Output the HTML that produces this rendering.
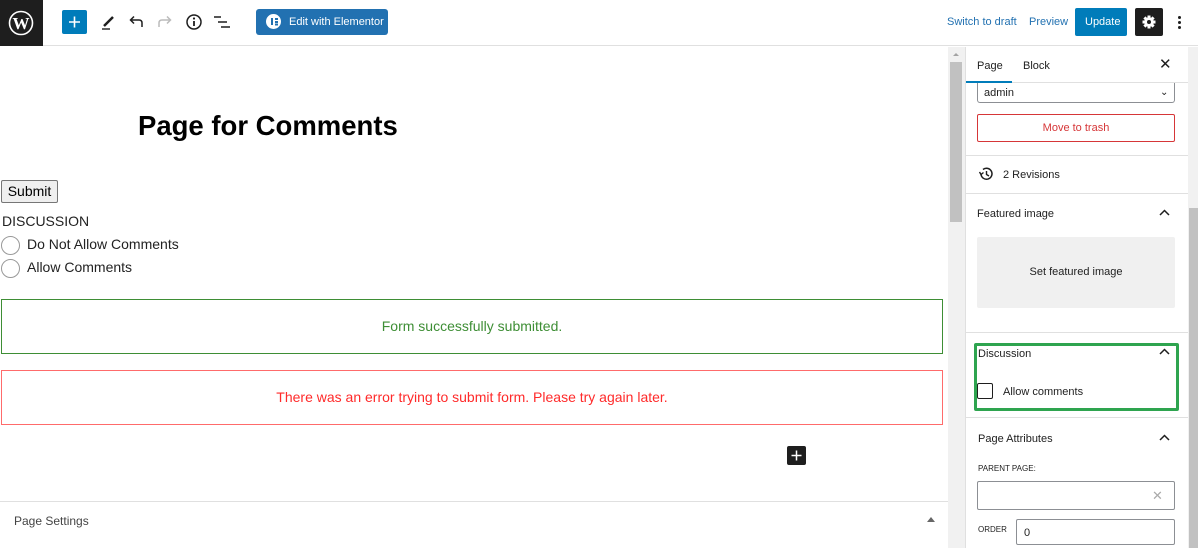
<!DOCTYPE html>
<html><head><style>
*{margin:0;padding:0;box-sizing:border-box}
body{width:1198px;height:548px;overflow:hidden;background:#fff;font-family:"Liberation Sans",sans-serif;color:#1e1e1e;position:relative}
.a{position:absolute}
.t{font-size:11px;white-space:nowrap}
</style></head><body>
<div class="a" style="left:0;top:0;width:1198px;height:46px;border-bottom:1px solid #e0e0e0"></div>
<div class="a" style="left:0;top:0;width:43px;height:46px;background:#1e1e1e"></div>
<svg class="a" style="left:8px;top:10px" width="26" height="26" viewBox="0 0 26 26"><circle cx="13" cy="13" r="11.5" fill="none" stroke="#fff" stroke-width="1.6"/><text x="13" y="19" text-anchor="middle" font-family="Liberation Serif" font-weight="bold" font-size="17" fill="#fff">W</text></svg>
<div class="a" style="left:62px;top:10px;width:25px;height:24px;background:#007cba;border-radius:2px"></div>
<svg class="a" style="left:62px;top:10px" width="25" height="24"><path d="M12.5 6.5 V17.5 M7 12 H18" stroke="#fff" stroke-width="1.6"/></svg>
<svg class="a" style="left:100px;top:12px" width="18" height="20"><path d="M4 14 L13 5" stroke="#1e1e1e" stroke-width="2.5"/><path d="M2 17 H10" stroke="#1e1e1e" stroke-width="1.4"/></svg>
<svg class="a" style="left:128px;top:14px" width="18" height="16"><path d="M14 13 V9 Q14 6 11 6 H3 M6 2.5 L2.5 6 L6 9.5" fill="none" stroke="#1e1e1e" stroke-width="1.5"/></svg>
<svg class="a" style="left:156px;top:14px" width="18" height="16"><path d="M3 13 V9 Q3 6 6 6 H14 M11 2.5 L14.5 6 L11 9.5" fill="none" stroke="#bbb" stroke-width="1.5"/></svg>
<svg class="a" style="left:185px;top:13px" width="18" height="18"><circle cx="9" cy="9" r="7" fill="none" stroke="#1e1e1e" stroke-width="1.5"/><path d="M9 8 V13" stroke="#1e1e1e" stroke-width="1.8"/><circle cx="9" cy="5.5" r="1.1" fill="#1e1e1e"/></svg>
<svg class="a" style="left:213px;top:14px" width="20" height="16"><path d="M1 3 H8 M5 8 H14 M8 13 H17" stroke="#1e1e1e" stroke-width="1.6"/></svg>
<div class="a" style="left:256px;top:9px;width:132px;height:26px;background:#2271b1;border-radius:3px"></div>
<div class="a" style="left:266px;top:14px;width:15px;height:15px;border-radius:50%;background:#fff"></div>
<div class="a" style="left:271px;top:18px;width:2px;height:7px;background:#2271b1"></div>
<div class="a" style="left:275px;top:18px;width:3px;height:1.5px;background:#2271b1;box-shadow:0 3px 0 #2271b1,0 5.5px 0 #2271b1"></div>
<div class="a t" style="left:289px;top:16px;color:#fff">Edit with Elementor</div>
<div class="a t" style="left:947px;top:16px;color:#2271b1">Switch to draft</div>
<div class="a t" style="left:1029px;top:16px;color:#2271b1">Preview</div>
<div class="a" style="left:1075px;top:8px;width:52px;height:28px;background:#007cba;border-radius:2px"></div>
<div class="a t" style="left:1085px;top:16px;color:#fff">Update</div>
<div class="a" style="left:1135px;top:8px;width:28px;height:28px;background:#1e1e1e;border-radius:2px"></div>
<svg class="a" style="left:1141px;top:14px" width="16" height="16" viewBox="0 0 16 16"><g stroke="#fff" stroke-width="3"><path d="M8 1.5 V14.5 M1.5 8 H14.5 M3.4 3.4 L12.6 12.6 M12.6 3.4 L3.4 12.6"/></g><circle cx="8" cy="8" r="4.8" fill="#fff"/><circle cx="8" cy="8" r="2" fill="#1e1e1e"/></svg>
<div class="a" style="left:1178px;top:16px;width:3px;height:3px;border-radius:50%;background:#1e1e1e;box-shadow:0 5px 0 #1e1e1e,0 10px 0 #1e1e1e"></div>
<div class="a" style="left:138px;top:110px;font-size:27.5px;font-weight:bold;color:#000">Page for Comments</div>
<div class="a" style="left:1px;top:180px;width:57px;height:23px;background:#efefef;border:1px solid #767676;border-radius:2px;font-size:14px;line-height:21px;text-align:center;color:#000">Submit</div>
<div class="a" style="left:2px;top:213px;font-size:14px;color:#222">DISCUSSION</div>
<div class="a" style="left:1px;top:236px;width:19px;height:19px;border:1px solid #999;border-radius:50%"></div>
<div class="a" style="left:27px;top:236px;font-size:14px;color:#222">Do Not Allow Comments</div>
<div class="a" style="left:1px;top:259px;width:19px;height:19px;border:1px solid #999;border-radius:50%"></div>
<div class="a" style="left:27px;top:259px;font-size:14px;color:#222">Allow Comments</div>
<div class="a" style="left:1px;top:299px;width:942px;height:55px;border:1px solid #3e8e35;text-align:center;line-height:53px;font-size:14px;color:#3e8e35">Form successfully submitted.</div>
<div class="a" style="left:1px;top:370px;width:942px;height:55px;border:1px solid #ff6b6b;text-align:center;line-height:53px;font-size:14px;color:#ff2a2a">There was an error trying to submit form. Please try again later.</div>
<div class="a" style="left:787px;top:446px;width:19px;height:19px;background:#1e1e1e;border-radius:2px"></div>
<svg class="a" style="left:787px;top:446px" width="19" height="19"><path d="M9.5 4.5 V14.5 M4.5 9.5 H14.5" stroke="#fff" stroke-width="1.5"/></svg>
<div class="a" style="left:0;top:501px;width:948px;height:1px;background:#e0e0e0"></div>
<div class="a" style="left:14px;top:514px;font-size:12px;color:#444">Page Settings</div>
<div class="a" style="left:927px;top:517px;width:0;height:0;border-left:4px solid transparent;border-right:4px solid transparent;border-bottom:5px solid #666"></div>
<div class="a" style="left:948px;top:47px;width:17px;height:501px;background:#f1f1f1"></div>
<div class="a" style="left:950px;top:62px;width:12px;height:160px;background:#c1c1c1"></div>
<div class="a" style="left:953px;top:53px;border-left:3px solid transparent;border-right:3px solid transparent;border-bottom:3px solid #a3a3a3"></div>
<div class="a" style="left:965px;top:47px;width:1px;height:501px;background:#e0e0e0"></div>
<div class="a" style="left:1188px;top:47px;width:10px;height:501px;background:#f1f1f1"></div>
<div class="a" style="left:1189px;top:208px;width:9px;height:340px;background:#c1c1c1"></div>
<div class="a t" style="left:977px;top:60px">Page</div>
<div class="a t" style="left:1023px;top:60px">Block</div>
<div class="a" style="left:1159px;top:55px;font-size:15px">✕</div>
<div class="a" style="left:966px;top:82px;width:222px;height:1px;background:#e0e0e0"></div>
<div class="a" style="left:966px;top:81px;width:46px;height:2px;background:#007cba"></div>
<div class="a" style="left:977px;top:83px;width:198px;height:20px;border:1px solid #8c8f94;border-top:none;border-radius:0 0 3px 3px"></div>
<div class="a t" style="left:984px;top:87px">admin</div>
<div class="a" style="left:1160px;top:87px;font-size:10px">⌄</div>
<div class="a" style="left:977px;top:114px;width:198px;height:28px;border:1px solid #d63638;border-radius:2px;text-align:center;line-height:26px;font-size:11px;color:#d63638">Move to trash</div>
<div class="a" style="left:966px;top:155px;width:222px;height:1px;background:#e0e0e0"></div>
<svg class="a" style="left:978px;top:166px" width="16" height="16"><path d="M3 8 A5.5 5.5 0 1 0 5 3.5" fill="none" stroke="#1e1e1e" stroke-width="1.5"/><path d="M1.5 6 L3 8.5 L5.5 6.5" fill="none" stroke="#1e1e1e" stroke-width="1.4"/><path d="M8.5 5 V8.5 L11 10" fill="none" stroke="#1e1e1e" stroke-width="1.4"/></svg>
<div class="a t" style="left:1003px;top:169px">2 Revisions</div>
<div class="a" style="left:966px;top:193px;width:222px;height:1px;background:#e0e0e0"></div>
<div class="a t" style="left:977px;top:208px">Featured image</div>
<svg class="a" style="left:1159px;top:209px" width="11" height="7"><path d="M1 6 L5.5 1.5 L10 6" fill="none" stroke="#1e1e1e" stroke-width="1.5"/></svg>
<div class="a" style="left:977px;top:237px;width:198px;height:71px;background:#f0f0f0;border-radius:2px;text-align:center;line-height:71px;font-size:11px">Set featured image</div>
<div class="a" style="left:966px;top:332px;width:222px;height:1px;background:#e0e0e0"></div>
<div class="a" style="left:974px;top:343px;width:205px;height:68px;border:3px solid #2ea44f;border-radius:2px"></div>
<div class="a t" style="left:978px;top:348px">Discussion</div>
<svg class="a" style="left:1159px;top:348px" width="11" height="7"><path d="M1 6 L5.5 1.5 L10 6" fill="none" stroke="#1e1e1e" stroke-width="1.5"/></svg>
<div class="a" style="left:977px;top:383px;width:16px;height:16px;border:1px solid #1e1e1e;border-radius:2px"></div>
<div class="a t" style="left:1003px;top:386px">Allow comments</div>
<div class="a" style="left:966px;top:417px;width:222px;height:1px;background:#e0e0e0"></div>
<div class="a t" style="left:978px;top:433px">Page Attributes</div>
<svg class="a" style="left:1159px;top:434px" width="11" height="7"><path d="M1 6 L5.5 1.5 L10 6" fill="none" stroke="#1e1e1e" stroke-width="1.5"/></svg>
<div class="a" style="left:978px;top:464px;font-size:8px">PARENT PAGE:</div>
<div class="a" style="left:977px;top:481px;width:198px;height:29px;border:1px solid #8c8f94;border-radius:2px"></div>
<div class="a" style="left:1152px;top:488px;font-size:13px;color:#aaa">✕</div>
<div class="a" style="left:978px;top:525px;font-size:8px">ORDER</div>
<div class="a" style="left:1016px;top:519px;width:159px;height:26px;border:1px solid #8c8f94;border-radius:2px"></div>
<div class="a t" style="left:1024px;top:527px">0</div>
</body></html>
